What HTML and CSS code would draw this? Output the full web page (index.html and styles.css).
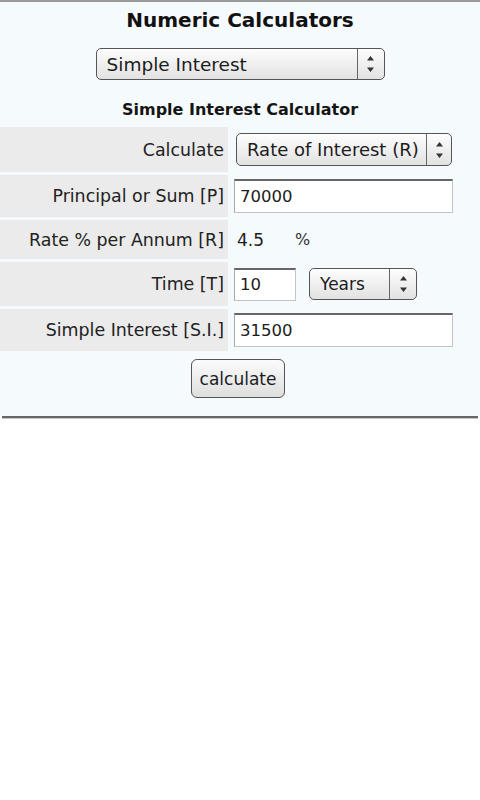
FILE: index.html
```html
<!DOCTYPE html>
<html lang="en">
<head>
<meta charset="utf-8">
<title>Numeric Calculators</title>
<link rel="stylesheet" href="styles.css">
</head>
<body>
<div class="page">
  <h1 class="title">Numeric Calculators</h1>
  <div class="sel sel-top">
    <select><option>Simple Interest</option></select>
    <span class="arrows"><svg width="7" height="16" viewBox="0 0 7 16"><path d="M3.5 0 L7 4.5 H0 Z M0 11.5 H7 L3.5 16 Z" fill="#333"/></svg></span>
  </div>
  <h2 class="subtitle">Simple Interest Calculator</h2>
  <div class="form">
    <div class="lbl">Calculate</div>
    <div class="val">
      <div class="sel sel-calc">
        <select><option>Rate of Interest (R)</option></select>
        <span class="arrows"><svg width="7" height="16" viewBox="0 0 7 16"><path d="M3.5 0 L7 4.5 H0 Z M0 11.5 H7 L3.5 16 Z" fill="#333"/></svg></span>
      </div>
    </div>
    <div class="lbl">Principal or Sum [P]</div>
    <div class="val"><input class="inp inp-wide" type="text" value="70000"></div>
    <div class="lbl">Rate % per Annum [R]</div>
    <div class="val"><span class="result">4.5</span><span class="pct">%</span></div>
    <div class="lbl">Time [T]</div>
    <div class="val">
      <input class="inp inp-short" type="text" value="10">
      <div class="sel sel-years">
        <select><option>Years</option></select>
        <span class="arrows"><svg width="7" height="16" viewBox="0 0 7 16"><path d="M3.5 0 L7 4.5 H0 Z M0 11.5 H7 L3.5 16 Z" fill="#333"/></svg></span>
      </div>
    </div>
    <div class="lbl">Simple Interest [S.I.]</div>
    <div class="val"><input class="inp inp-wide" type="text" value="31500"></div>
  </div>
  <div class="actions"><button class="btn" type="button">calculate</button></div>
</div>
<hr class="rule">
</body>
</html>
```

FILE: styles.css
```css
html, body {
  margin: 0;
  padding: 0;
  background: #ffffff;
}
body {
  font-family: "DejaVu Sans", Verdana, sans-serif;
  color: #1c1c1c;
}
.page {
  background: #f5fafd;
  border-top: 2px solid #9a9a9a;
  padding-bottom: 18px;
}
.title {
  margin: 0;
  font-size: 20px;
  font-weight: bold;
  line-height: 36px;
  text-align: center;
  color: #111;
}
.sel {
  display: flex;
  box-sizing: border-box;
  border: 1px solid #555;
  border-radius: 5px;
  background: linear-gradient(#fdfdfd, #e2e2e2);
  overflow: hidden;
}
.sel select {
  -webkit-appearance: none;
  appearance: none;
  flex: 1;
  min-width: 0;
  border: 0;
  margin: 0;
  background: transparent;
  font-family: inherit;
  color: #1c1c1c;
  padding: 0 0 0 10px;
  height: 100%;
  outline: none;
}
.arrows {
  display: flex;
  align-items: center;
  justify-content: center;
  width: 26px;
  border-left: 1px solid #666;
}
.sel-top {
  width: 289px;
  height: 32px;
  margin: 10px auto 0;
}
.sel-top select {
  font-size: 18.5px;
}
.subtitle {
  margin: 20px 0 7px;
  font-size: 16px;
  font-weight: bold;
  line-height: 20px;
  text-align: center;
  color: #151515;
}
.form {
  display: grid;
  grid-template-columns: 228px 1fr;
  grid-template-rows: 45px 42px 39px 44px 42px;
  column-gap: 3px;
  row-gap: 3px;
}
.lbl {
  background: #ebebeb;
  display: flex;
  align-items: center;
  justify-content: flex-end;
  padding-right: 4px;
  font-size: 17.4px;
  color: #222;
}
.val {
  display: flex;
  align-items: center;
  padding-left: 3px;
  font-size: 17px;
}
.sel-calc {
  width: 216px;
  height: 33px;
  margin-left: 2px;
}
.sel-calc select {
  font-size: 18px;
}
.sel-calc .arrows {
  width: 24px;
}
.inp {
  box-sizing: border-box;
  height: 34px;
  margin: 0;
  padding: 0 0 0 5px;
  background: #fff;
  border: 1px solid #c4c4c4;
  border-top: 2px solid #666;
  border-left-color: #a8a8a8;
  font-family: inherit;
  font-size: 16.5px;
  color: #1c1c1c;
  outline: none;
}
.inp-wide {
  width: 219px;
}
.inp-short {
  width: 62px;
  height: 33px;
}
.sel-years {
  width: 108px;
  height: 32px;
  margin-left: 13px;
}
.sel-years select {
  font-size: 17px;
}
.result {
  display: inline-block;
  width: 58px;
  padding-left: 3px;
}
.pct {
  color: #333;
  font-size: 16px;
}
.actions {
  display: flex;
  justify-content: center;
  padding-top: 8px;
  padding-right: 4px;
}
.btn {
  box-sizing: border-box;
  width: 94px;
  height: 39px;
  margin: 0;
  padding: 0;
  border: 1px solid #555;
  border-radius: 6px;
  background: linear-gradient(#fbfbfb, #dedede);
  font-family: inherit;
  font-size: 17px;
  color: #1c1c1c;
}
.rule {
  margin: 0 2px;
  border: 0;
  border-top: 2px solid #666;
  border-bottom: 1px solid #c8c8c8;
  height: 0;
}
```
